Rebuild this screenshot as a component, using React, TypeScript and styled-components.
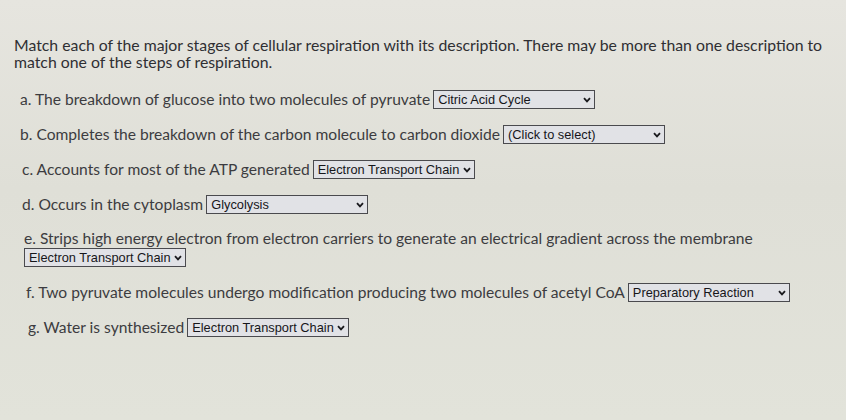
import styled, { createGlobalStyle } from "styled-components";

const GlobalStyle = createGlobalStyle`
  html, body {
    margin: 0;
    padding: 0;
  }
  body {
    width: 846px;
    height: 420px;
    overflow: hidden;
    background: linear-gradient(180deg, #e6e5df 0%, #dfdfd7 45%, #e2e3da 100%);
    font-family: Lato, "Open Sans", sans-serif;
  }
`;

const Page = styled.div`
  padding: 36px 14px 0 14px;
  display: flex;
  flex-direction: column;
  gap: 20px;
`;

const Prompt = styled.p`
  margin: 0;
  font-size: 15.8px;
  line-height: 17px;
  color: #2f2f33;
`;

const List = styled.div`
  display: flex;
  flex-direction: column;
  gap: 16px;
  padding-left: 6px;
`;

const Row = styled.div<{ $indent?: number; $wrap?: boolean }>`
  display: flex;
  flex-wrap: ${(p) => (p.$wrap ? "wrap" : "nowrap")};
  align-items: center;
  column-gap: 3px;
  row-gap: 1px;
  margin-left: ${(p) => p.$indent ?? 0}px;
  min-height: 19px;
  font-size: 15.6px;
  line-height: 17px;
  color: #3c3c40;
  white-space: nowrap;
`;

const Label = styled.span<{ $full?: boolean }>`
  display: block;
  flex-basis: ${(p) => (p.$full ? "100%" : "auto")};
`;

const SelectBox = styled.div`
  box-sizing: border-box;
  width: 162px;
  height: 19px;
  display: flex;
  align-items: center;
  justify-content: space-between;
  padding: 0 3px 0 4px;
  border: 1px solid #4a4a4e;
  background: #e1e2e6;
  font-family: "Liberation Sans", Arial, sans-serif;
  font-size: 12.8px;
  color: #16161a;
  white-space: nowrap;
`;

const Chevron = () => (
  <svg width="8" height="6" viewBox="0 0 8 6">
    <path d="M1 1.2 L4 4.4 L7 1.2" fill="none" stroke="#1a1a1e" strokeWidth="1.8" />
  </svg>
);

const Select = ({ value }: { value: string }) => (
  <SelectBox>
    <span>{value}</span>
    <Chevron />
  </SelectBox>
);

export default function App() {
  return (
    <>
      <GlobalStyle />
      <Page>
        <Prompt>
          Match each of the major stages of cellular respiration with its description. There may be more than one
          description to match one of the steps of respiration.
        </Prompt>
        <List>
          <Row>
            <Label>a. The breakdown of glucose into two molecules of pyruvate</Label>
            <Select value="Citric Acid Cycle" />
          </Row>
          <Row>
            <Label>b. Completes the breakdown of the carbon molecule to carbon dioxide</Label>
            <Select value="(Click to select)" />
          </Row>
          <Row $indent={2}>
            <Label>c. Accounts for most of the ATP generated</Label>
            <Select value="Electron Transport Chain" />
          </Row>
          <Row $indent={2}>
            <Label>d. Occurs in the cytoplasm</Label>
            <Select value="Glycolysis" />
          </Row>
          <Row $indent={4} $wrap>
            <Label $full>
              e. Strips high energy electron from electron carriers to generate an electrical gradient across the membrane
            </Label>
            <Select value="Electron Transport Chain" />
          </Row>
          <Row $indent={6}>
            <Label>f. Two pyruvate molecules undergo modification producing two molecules of acetyl CoA</Label>
            <Select value="Preparatory Reaction" />
          </Row>
          <Row $indent={8}>
            <Label>g. Water is synthesized</Label>
            <Select value="Electron Transport Chain" />
          </Row>
        </List>
      </Page>
    </>
  );
}
